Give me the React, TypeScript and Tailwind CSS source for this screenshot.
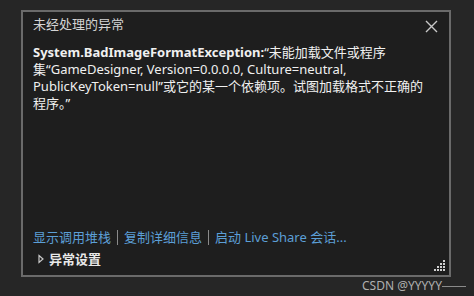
// Unhandled exception popup (VS dark theme)
const font = { fontFamily: '"Segoe UI", "Noto Sans", "Noto Sans CJK SC", sans-serif' };

function CloseIcon() {
  return (
    <svg width="13" height="13" viewBox="0 0 13 13" className="text-[#c8c8c8]">
      <path d="M1 1 L12 12 M12 1 L1 12" stroke="currentColor" strokeWidth="1.4" fill="none" />
    </svg>
  );
}

function Grip() {
  // dotted resize grip, bottom-right corner
  const dots: [number, number][] = [];
  for (let r = 0; r < 4; r++) {
    for (let c = 0; c < 4; c++) {
      if (c >= 3 - r) dots.push([c * 3, r * 3]);
    }
  }
  return (
    <svg width="12" height="12" viewBox="0 0 12 12">
      {dots.map(([x, y]) => (
        <rect key={`${x}-${y}`} x={x} y={y} width="2" height="2" fill="#d0d0d0" />
      ))}
    </svg>
  );
}

export default function App() {
  return (
    <div className="h-[296px] w-[474px] overflow-hidden bg-[#262626] pl-[21px] pt-[10px]" style={font}>
      <div className="relative flex h-[267px] w-[430px] flex-col border-2 border-[#6a6a6a] bg-[#1e1e1e] pl-[10px] pr-[10px]">
        <div className="flex h-[26px] items-center justify-between">
          <span className="text-[13px] text-[#d4d4d4]">未经处理的异常</span>
          <span className="mr-[1px] mt-[2px]"><CloseIcon /></span>
        </div>
        <div className="mt-[6px] text-[13px] leading-[17px] text-[#f0f0f0]">
          <span className="font-bold">System.BadImageFormatException:</span>“未能加载文件或程序
          <br />
          集“GameDesigner, Version=0.0.0.0, Culture=neutral,
          <br />
          PublicKeyToken=null”或它的某一个依赖项。试图加载格式不正确的
          <br />
          程序。”
        </div>
        <div className="flex-1" />
        <div className="flex items-center text-[13px] text-[#5c9fd6]">
          <span>显示调用堆栈</span>
          <span className="mx-[6px] h-[15px] w-px bg-[#8a8a8a]" />
          <span>复制详细信息</span>
          <span className="mx-[6px] h-[15px] w-px bg-[#8a8a8a]" />
          <span>启动 Live Share 会话...</span>
        </div>
        <div className="mb-[6px] mt-[2px] flex items-center text-[13px] text-[#e8e8e8]">
          <svg width="10" height="10" viewBox="0 0 10 10" className="ml-[3px] mr-[3px]">
            <path d="M3 1.5 L7 5 L3 8.5 Z" fill="none" stroke="#c8c8c8" strokeWidth="1.2" />
          </svg>
          <span className="font-bold">异常设置</span>
        </div>
        <div className="absolute bottom-[3px] right-[3px]"><Grip /></div>
      </div>
      <div className="mt-[1px] flex items-center pl-[341px] text-[12px] leading-[16px] text-[#b0b0b0]">
        <span>CSDN @YYYYY</span>
        <span className="h-px w-[24px] bg-[#8a8a8a]" />
      </div>
    </div>
  );
}
